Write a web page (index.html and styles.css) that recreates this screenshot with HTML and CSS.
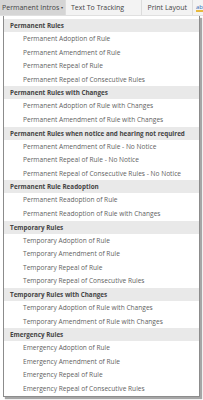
FILE: index.html
```html
<!DOCTYPE html>
<html>
<head>
<meta charset="utf-8">
<link rel="stylesheet" href="styles.css">
</head>
<body>
<div class="toolbar">
  <div class="tb-btn active">Permanent Intros <span class="caret">▾</span></div>
  <div class="tb-btn wide">Text To Tracking</div>
  <div class="tb-btn">Print Layout</div>
  <div class="tb-icon"><span class="ab">ab</span></div>
</div>
<div class="menu">
  <div class="hdr">Permanent Rules</div>
  <div class="item">Permanent Adoption of Rule</div>
  <div class="item">Permanent Amendment of Rule</div>
  <div class="item">Permanent Repeal of Rule</div>
  <div class="item">Permanent Repeal of Consecutive Rules</div>
  <div class="hdr">Permanent Rules with Changes</div>
  <div class="item">Permanent Adoption of Rule with Changes</div>
  <div class="item">Permanent Amendment of Rule with Changes</div>
  <div class="hdr">Permanent Rules when notice and hearing not required</div>
  <div class="item">Permanent Amendment of Rule - No Notice</div>
  <div class="item">Permanent Repeal of Rule - No Notice</div>
  <div class="item">Permanent Repeal of Consecutive Rules - No Notice</div>
  <div class="hdr">Permanent Rule Readoption</div>
  <div class="item">Permanent Readoption of Rule</div>
  <div class="item">Permanent Readoption of Rule with Changes</div>
  <div class="hdr">Temporary Rules</div>
  <div class="item">Temporary Adoption of Rule</div>
  <div class="item">Temporary Amendment of Rule</div>
  <div class="item">Temporary Repeal of Rule</div>
  <div class="item">Temporary Repeal of Consecutive Rules</div>
  <div class="hdr">Temporary Rules with Changes</div>
  <div class="item">Temporary Adoption of Rule with Changes</div>
  <div class="item">Temporary Amendment of Rule with Changes</div>
  <div class="hdr">Emergency Rules</div>
  <div class="item">Emergency Adoption of Rule</div>
  <div class="item">Emergency Amendment of Rule</div>
  <div class="item">Emergency Repeal of Rule</div>
  <div class="item">Emergency Repeal of Consecutive Rules</div>
</div>
</body>
</html>
```
FILE: styles.css
```css
html, body {
  margin: 0;
  padding: 0;
  background: #ffffff;
  width: 203px;
  height: 400px;
  overflow: hidden;
}
body {
  font-family: "Open Sans", "Noto Sans", sans-serif;
  font-size: 6.6px;
  color: #555;
}
.toolbar {
  display: flex;
  align-items: stretch;
  height: 15px;
  background: #f3f3f3;
  border-bottom: 1px solid #e0e0e0;
  white-space: nowrap;
  font-size: 7px;
}
.tb-btn {
  display: flex;
  align-items: center;
  padding: 0 5px 0 2px;
  color: #444;
  border-right: 1px solid #dcdcdc;
}
.tb-btn.active {
  background: #d5d5d5;
  padding-right: 3px;
  width: 60px;
}
.tb-btn.wide {
  width: 66px;
  padding-left: 5px;
}
.tb-btn + .tb-btn {
  padding-left: 5px;
}
.caret {
  font-size: 4px;
  margin-left: 2px;
}
.tb-icon {
  display: flex;
  align-items: center;
  padding-left: 3px;
}
.ab {
  font-size: 6px;
  color: #2f6db5;
  border-bottom: 2px solid #e7b93c;
  line-height: 6px;
}
.menu {
  margin: 0 3px 0 3px;
  height: 381px;
  box-sizing: border-box;
  border: 1px solid #8c8c8c;
  border-top: none;
  background: #fff;
  padding-top: 3px;
  box-shadow: 2px 2px 1px rgba(0,0,0,0.35);
  display: flex;
  flex-direction: column;
}
.hdr {
  height: 13px;
  line-height: 13px;
  background: #e9e9e9;
  font-weight: bold;
  font-size: 6.3px;
  color: #444;
  padding-left: 6px;
  white-space: nowrap;
  overflow: hidden;
}
.item {
  height: 13.6px;
  line-height: 13.6px;
  padding-left: 19px;
  color: #5f5f5f;
  white-space: nowrap;
}
```
